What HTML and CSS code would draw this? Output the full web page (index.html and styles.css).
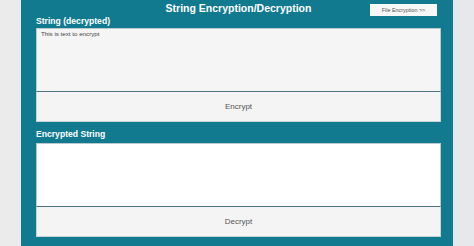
FILE: index.html
```html
<!DOCTYPE html>
<html lang="en">
<head>
    <meta charset="UTF-8">
    <meta name="viewport" content="width=device-width, initial-scale=1.0">
    <title>String Encryption/Decryption</title>
    <link rel="stylesheet" href="styles.css">
</head>
<body>

<div class="panel">
    <header class="top-bar">
        <span></span>
        <h1>String Encryption/Decryption</h1>
        <a href="#" class="file-button">File Encryption &gt;&gt;</a>
    </header>

    <div class="section">
        <label for="plain">String (decrypted)</label>
        <textarea id="plain" class="text-box">This is text to encrypt</textarea>
        <button class="action-button">Encrypt</button>
    </div>

    <div class="section second">
        <label for="cipher">Encrypted String</label>
        <textarea id="cipher" class="text-box white"></textarea>
        <button class="action-button">Decrypt</button>
    </div>
</div>

</body>
</html>
```

FILE: styles.css
```css
html, body {
    height: 100%;
}
body {
    font-family: "Liberation Sans", Arial, sans-serif;
    margin: 0;
    padding: 0;
    background: linear-gradient(to right, #ebebeb, #e6e8ec);
    color: #333;
}
.panel {
    box-sizing: border-box;
    width: 432px;
    height: 100%;
    margin-left: 21px;
    padding: 2px 12px 9px 15px;
    background-color: #127a8f;
    display: flex;
    flex-direction: column;
}
.top-bar {
    display: grid;
    grid-template-columns: 1fr auto 1fr;
    align-items: start;
    height: 14px;
}
.top-bar h1 {
    margin: 0;
    font-size: 10.5px;
    line-height: 13px;
    color: #fff;
    font-weight: bold;
}
.file-button {
    justify-self: end;
    margin: 2px 4px 0 0;
    width: 67px;
    height: 12px;
    line-height: 12px;
    background-color: #f7f7f7;
    color: #555;
    font-size: 5.4px;
    text-align: center;
    text-decoration: none;
}
.section {
    display: flex;
    flex-direction: column;
}
.section label {
    color: #fff;
    font-weight: bold;
    font-size: 8.6px;
    line-height: 10px;
    margin-bottom: 2px;
}
.section.second {
    margin-top: 9px;
}
.section.second label {
    margin-top: -2px;
    margin-bottom: 4px;
}
.text-box {
    box-sizing: border-box;
    height: 64px;
    margin: 0;
    padding: 1px 4px;
    border: 1px solid #b9c9cd;
    border-bottom: 1px solid #4f7480;
    background-color: #f5f5f5;
    font-family: "Liberation Sans", Arial, sans-serif;
    font-size: 6.2px;
    color: #444;
    resize: none;
    outline: none;
}
.text-box.white {
    background-color: #fff;
}
.action-button {
    height: 30px;
    margin: 0;
    border: 1px solid #c8d3d6;
    border-top: none;
    background-color: #f4f4f4;
    color: #555;
    font-family: "Liberation Sans", Arial, sans-serif;
    font-size: 8px;
}
```
